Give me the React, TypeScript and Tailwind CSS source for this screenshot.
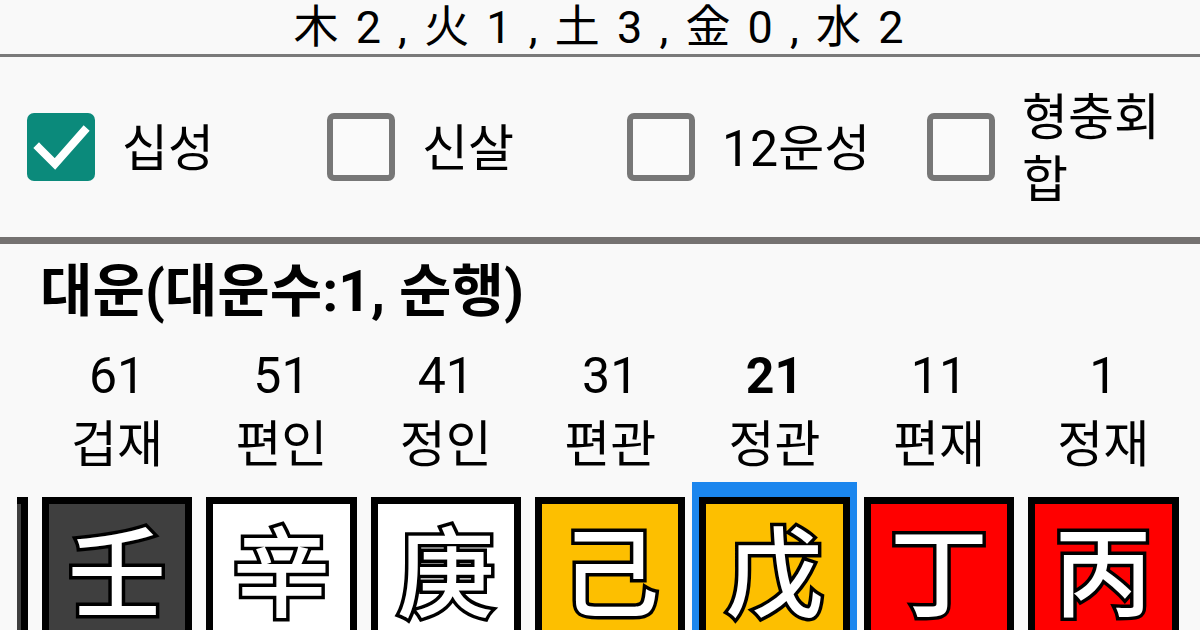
import React from "react";

const FONT = "font-['Roboto','Noto_Sans_CJK_KR',sans-serif]";

type Opt = { label: string; checked: boolean };
const options: Opt[] = [
  { label: "십성", checked: true },
  { label: "신살", checked: false },
  { label: "12운성", checked: false },
  { label: "형충회합", checked: false },
];

type Col = { age: string; god: string; stem: string; bg: string; selected?: boolean };
const cols: Col[] = [
  // scrolled-off column: only its right edge peeks in
  { age: "", god: "", stem: "", bg: "bg-[#3f3f3f]" },
  { age: "61", god: "겁재", stem: "壬", bg: "bg-[#3f3f3f]" },
  { age: "51", god: "편인", stem: "辛", bg: "bg-white" },
  { age: "41", god: "정인", stem: "庚", bg: "bg-white" },
  { age: "31", god: "편관", stem: "己", bg: "bg-[#fdbf00]" },
  { age: "21", god: "정관", stem: "戊", bg: "bg-[#fdbf00]", selected: true },
  { age: "11", god: "편재", stem: "丁", bg: "bg-[#ff0000]" },
  { age: "1", god: "정재", stem: "丙", bg: "bg-[#ff0000]" },
];

function CheckBox({ checked }: { checked: boolean }) {
  if (checked) {
    return (
      <div className="w-[68px] h-[68px] shrink-0 rounded-[7px] bg-[#0b8a7b] flex items-center justify-center">
        <svg width="68" height="68" viewBox="0 0 68 68">
          <polyline
            points="12,35 28,51 57,18"
            fill="none"
            stroke="#ffffff"
            strokeWidth="8"
            strokeLinecap="square"
          />
        </svg>
      </div>
    );
  }
  return (
    <div className="w-[68px] h-[68px] shrink-0 rounded-[7px] border-[6px] border-[#777777] bg-[#fafafa]" />
  );
}

export default function App() {
  return (
    <div className={`w-[1200px] h-[630px] overflow-hidden bg-[#f9f9f9] text-black ${FONT}`}>
      {/* five elements count */}
      <div className="h-[54px] flex items-center justify-center text-[45px] tracking-[3px] leading-none">
        木 2 , 火 1 , 土 3 , 金 0 , 水 2
      </div>
      <div className="h-[3px] bg-[#7a7a7a]" />

      {/* display options */}
      <div className="h-[180px] grid grid-cols-4">
        {options.map((o) => (
          <div key={o.label} className="flex items-center pl-[27px] gap-[27px]">
            <CheckBox checked={o.checked} />
            <span className="text-[50px] leading-[62px] max-w-[160px] break-all pt-[4px]">
              {o.label}
            </span>
          </div>
        ))}
      </div>
      <div className="h-[7px] bg-[#757271]" />

      {/* great luck header */}
      <div className="h-[94px] flex items-center pl-[40px] text-[57px] font-bold leading-none">
        대운(대운수:1, 순행)
      </div>

      {/* great luck columns */}
      <div className="ml-[17px] overflow-hidden mt-[2px]">
        <div className="flex ml-[-146.6px]">
          {cols.map((c, i) => (
            <div key={i} className="w-[164.4px] shrink-0 flex flex-col items-center">
              <div
                className={`h-[72px] flex items-center text-[50px] leading-none ${
                  c.selected ? "font-bold" : ""
                }`}
              >
                {c.age}
              </div>
              <div className="h-[66px] flex items-center text-[50px] leading-none">{c.god}</div>
              <div
                className={`mt-[4px] w-full pt-[15px] px-[7px] ${
                  c.selected ? "bg-[#1b86ee]" : ""
                }`}
              >
                <div
                  className={`h-[133px] border-[7px] border-b-0 border-black ${c.bg} flex items-center justify-center pb-[2px]`}
                >
                  <span className="font-['Noto_Sans_CJK_SC',sans-serif] font-medium text-[98px] leading-none text-white [-webkit-text-stroke:7px_#000] [paint-order:stroke_fill]">
                    {c.stem}
                  </span>
                </div>
              </div>
            </div>
          ))}
        </div>
      </div>
    </div>
  );
}
